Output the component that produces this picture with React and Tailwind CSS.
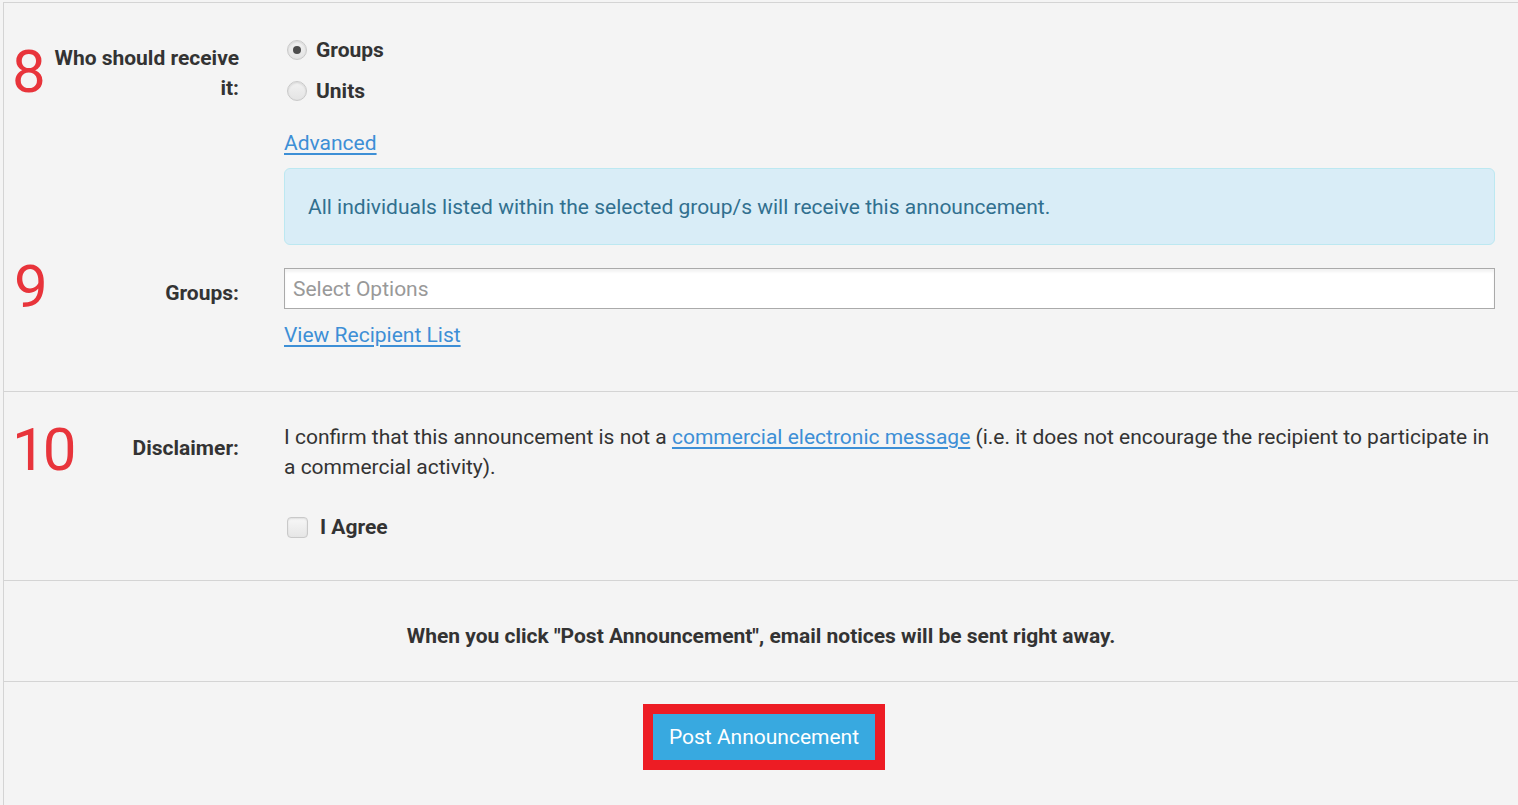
import { useState } from "react";

function Radio({ checked, label, onChange }) {
  return (
    <label className="flex items-center h-[30px] cursor-pointer">
      <span className="ml-[3px] w-[20px] h-[20px] rounded-full border border-[#c9c9c9] bg-gradient-to-b from-[#f2f2f2] to-[#e4e4e4] shadow-[inset_0_1px_2px_rgba(0,0,0,0.12)] flex items-center justify-center">
        {checked && <span className="w-[8px] h-[8px] rounded-full bg-[#4d4d4d]"></span>}
      </span>
      <input type="radio" className="hidden" checked={checked} onChange={onChange} />
      <span className="ml-[9px] font-bold">{label}</span>
    </label>
  );
}

function Numero({ n, className }) {
  return <div className={"text-[60px] leading-none text-[#e8343b] " + className}>{n}</div>;
}

export default function App() {
  const [destino, setDestino] = useState("groups");
  const [acepto, setAcepto] = useState(false);

  return (
    <div className="w-full h-[805px] bg-[#f4f4f4] overflow-hidden text-[21px] leading-[30px] text-[#333]" style={{ fontFamily: "Roboto, 'Liberation Sans', sans-serif" }}>
      <div className="ml-[3px] mt-[2px] min-h-[803px] border-l border-t border-[#d4d4d4]">

        {/* 8 y 9 */}
        <div className="pt-[32px] pb-[41px] border-b border-[#d4d4d4]">
          <div className="flex">
            <div className="w-[235px] flex justify-between pl-[8px]">
              <Numero n="8" className="mt-[7px]" />
              <div className="w-[190px] mt-[8px] text-right font-bold">Who should receive it:</div>
            </div>
            <div className="ml-[45px] mr-[23px] flex-1">
              <Radio checked={destino === "groups"} label="Groups" onChange={() => setDestino("groups")} />
              <div className="mt-[11px]">
                <Radio checked={destino === "units"} label="Units" onChange={() => setDestino("units")} />
              </div>
              <a href="#" className="block w-fit mt-[22px] text-[#3d8fd6] underline underline-offset-[3px]">Advanced</a>
              <div className="mt-[10px] border border-[#bce8f1] bg-[#d9edf7] rounded-[6px] px-[23px] pt-[23px] pb-[22px] text-[#31708f]">
                All individuals listed within the selected group/s will receive this announcement.
              </div>
            </div>
          </div>

          <div className="flex mt-[23px]">
            <div className="w-[235px] flex justify-between pl-[10px]">
              <Numero n="9" className="-mt-[11px]" />
              <div className="mt-[10px] text-right font-bold">Groups:</div>
            </div>
            <div className="ml-[45px] mr-[23px] flex-1">
              <div className="h-[41px] border border-[#aaa] bg-white shadow-[inset_0_3px_3px_rgba(0,0,0,0.05)] flex items-center pl-[8px] text-[#999]">
                Select Options
              </div>
              <a href="#" className="block w-fit mt-[11px] text-[#3d8fd6] underline underline-offset-[3px]">View Recipient List</a>
            </div>
          </div>
        </div>

        {/* 10 */}
        <div className="pt-[30px] pb-[38px] border-b border-[#d4d4d4]">
          <div className="flex">
            <div className="w-[235px] flex justify-between pl-[8px]">
              <Numero n="10" className="-mt-[2px] text-[56px] tracking-[-3px]" />
              <div className="mt-[11px] text-right font-bold">Disclaimer:</div>
            </div>
            <div className="ml-[45px] mr-[23px] flex-1">
              <p>
                I confirm that this announcement is not a{" "}
                <a href="#" className="text-[#3d8fd6] underline underline-offset-[3px]">commercial electronic message</a>{" "}
                (i.e. it does not encourage the recipient to participate in a commercial activity).
              </p>
              <label className="flex items-center h-[30px] mt-[30px] cursor-pointer">
                <input type="checkbox" className="hidden" checked={acepto} onChange={() => setAcepto(!acepto)} />
                <span className="ml-[3px] w-[21px] h-[21px] rounded-[4px] border border-[#c9c9c9] bg-gradient-to-b from-[#f7f7f7] to-[#e6e6e6] shadow-[inset_0_1px_2px_rgba(0,0,0,0.1)] flex items-center justify-center text-[14px]">
                  {acepto && "✓"}
                </span>
                <span className="ml-[12px] font-bold">I Agree</span>
              </label>
            </div>
          </div>
        </div>

        {/* Aviso */}
        <div className="pt-[40px] pb-[30px] border-b border-[#d4d4d4] text-center font-bold">
          When you click "Post Announcement", email notices will be sent right away.
        </div>

        {/* Boton */}
        <div className="pt-[22px] flex justify-center">
          <div className="border-[10px] border-[#ed1c24] ml-[6px]">
            <button className="h-[46px] px-[16px] bg-[#38a9e0] text-white">Post Announcement</button>
          </div>
        </div>
      </div>
    </div>
  );
}
